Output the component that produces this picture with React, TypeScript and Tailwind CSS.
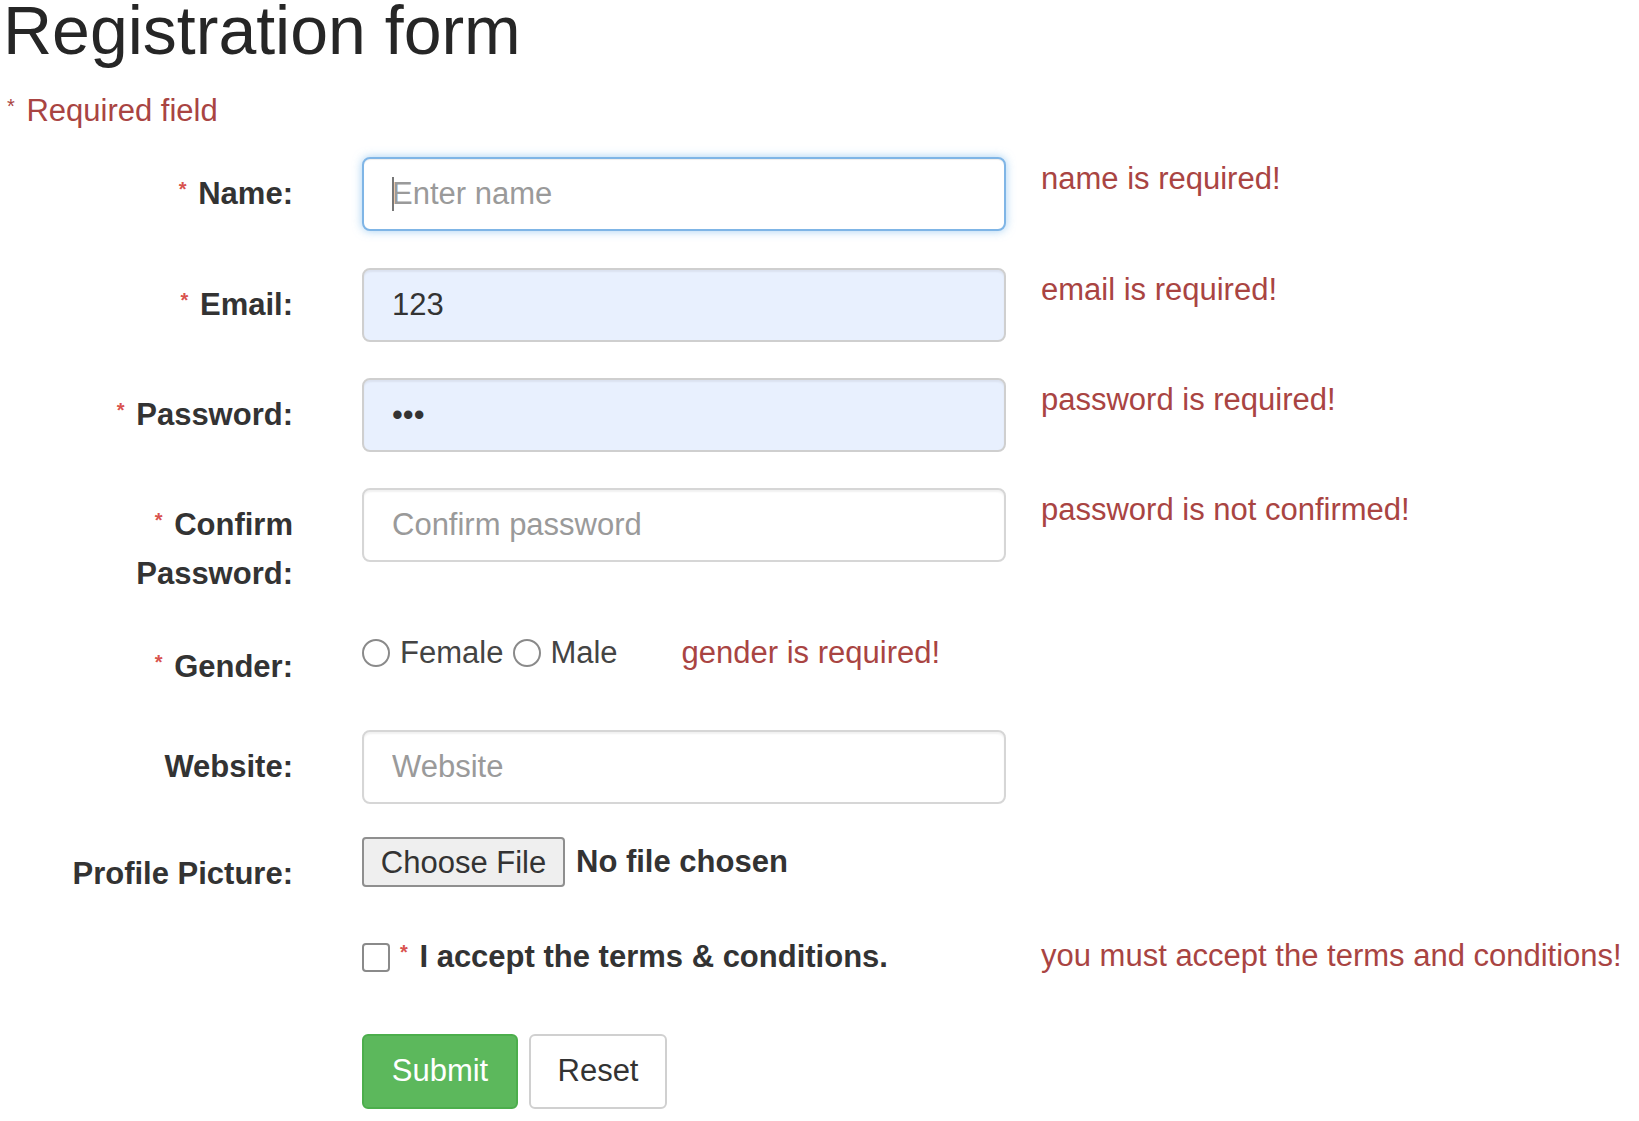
import type { ReactNode } from 'react';

function Star({ className = 'text-[#d9534f]' }: { className?: string }) {
  return <span className={`relative -top-[8px] mr-[3px] text-[20px] ${className}`}>*</span>;
}

function Row({
  label,
  required,
  error,
  className = '',
  children,
}: {
  label?: ReactNode;
  required?: boolean;
  error?: string;
  className?: string;
  children: ReactNode;
}) {
  return (
    <div className={`flex items-start ${className}`}>
      <div className="w-[293px] shrink-0 pt-[14px] text-right text-[31px] leading-[46px] font-bold text-[#333]">
        {label && (
          <>
            {required && <Star />} {label}
          </>
        )}
      </div>
      <div className="ml-[69px] w-[644px] shrink-0">{children}</div>
      {error && (
        <div className="ml-[35px] whitespace-nowrap text-[31px] leading-[43px] text-[#a94442]">{error}</div>
      )}
    </div>
  );
}

const inputBase =
  'block h-[74px] w-full rounded-[8px] border-2 px-[28px] text-[31px] text-[#333] outline-none placeholder:text-[#9a9a9a]';

export default function App() {
  return (
    <div className="min-h-screen bg-white font-['Liberation_Sans',Arial,sans-serif] text-[#333]">
      {/* Heading */}
      <h1 className="ml-[3px] text-[68px] leading-[60px] font-normal text-[#262626]">Registration form</h1>
      <p className="mt-[28px] ml-[7px] text-[31px] leading-[46px] text-[#a94442]">
        <Star className="text-[#a94442]" /> Required field
      </p>

      <form onSubmit={(e) => e.preventDefault()}>
        <Row label="Name:" required error="name is required!" className="mt-[20px]">
          <div className="relative">
            <input
              type="text"
              placeholder="Enter name"
              className={`${inputBase} border-[#7fb5e6] bg-white shadow-[inset_0_1px_1px_rgba(0,0,0,0.075),0_0_10px_rgba(102,175,233,0.6)]`}
            />
            <span className="absolute top-[20px] left-[30px] h-[34px] w-[2px] bg-[#777]" />
          </div>
        </Row>

        <Row label="Email:" required error="email is required!" className="mt-[37px]">
          <input
            type="text"
            defaultValue="123"
            className={`${inputBase} border-[#cfcfcf] bg-[#e8f0fe] shadow-[inset_0_2px_2px_rgba(0,0,0,0.06)]`}
          />
        </Row>

        <Row label="Password:" required error="password is required!" className="mt-[36px]">
          <input
            type="password"
            defaultValue="123"
            className={`${inputBase} border-[#cfcfcf] bg-[#e8f0fe] shadow-[inset_0_2px_2px_rgba(0,0,0,0.06)]`}
          />
        </Row>

        <Row
          label={
            <>
              Confirm
              <br />
              Password:
            </>
          }
          required
          error="password is not confirmed!"
          className="mt-[36px]"
        >
          <input
            type="password"
            placeholder="Confirm password"
            className={`${inputBase} border-[#d6d6d6] bg-white shadow-[inset_0_2px_2px_rgba(0,0,0,0.06)]`}
          />
        </Row>

        <Row label="Gender:" required className="mt-[33px]">
          <div className="flex h-[46px] items-center whitespace-nowrap text-[31px] text-[#444]">
            <span className="h-[28px] w-[28px] rounded-full border-2 border-[#8a8a8a] bg-white" />
            <span className="ml-[10px]">Female</span>
            <span className="ml-[10px] h-[28px] w-[28px] rounded-full border-2 border-[#8a8a8a] bg-white" />
            <span className="ml-[9px]">Male</span>
            <span className="ml-[64px] text-[#a94442]">gender is required!</span>
          </div>
        </Row>

        <Row label="Website:" className="mt-[37px]">
          <input
            type="text"
            placeholder="Website"
            className={`${inputBase} border-[#d6d6d6] bg-white shadow-[inset_0_2px_2px_rgba(0,0,0,0.06)]`}
          />
        </Row>

        <Row label="Profile Picture:" className="mt-[33px]">
          <div className="flex items-center whitespace-nowrap">
            <button
              type="button"
              className="h-[50px] w-[203px] rounded-[4px] border-2 border-[#8f8f8f] bg-[#efefef] text-[31px] leading-none text-[#333]"
            >
              Choose File
            </button>
            <span className="ml-[11px] text-[31px] font-bold text-[#333]">No file chosen</span>
          </div>
        </Row>

        <Row error="you must accept the terms and conditions!" className="mt-[37px] [&>div:first-child]:pt-0">
          <div className="flex h-[46px] items-center whitespace-nowrap text-[31px] font-bold text-[#333]">
            <span className="h-[29px] w-[28px] rounded-[4px] border-2 border-[#8a8a8a] bg-white" />
            <span className="ml-[10px]">
              <Star /> I accept the terms &amp; conditions.
            </span>
          </div>
        </Row>

        <div className="mt-[54px] flex pl-[362px]">
          <button
            type="submit"
            className="h-[75px] w-[156px] rounded-[6px] border-2 border-[#4cae4c] bg-[#5cb85c] text-[31px] text-white"
          >
            Submit
          </button>
          <button
            type="reset"
            className="ml-[11px] h-[75px] w-[138px] rounded-[6px] border-2 border-[#d0d0d0] bg-white text-[31px] text-[#333]"
          >
            Reset
          </button>
        </div>
      </form>
    </div>
  );
}
